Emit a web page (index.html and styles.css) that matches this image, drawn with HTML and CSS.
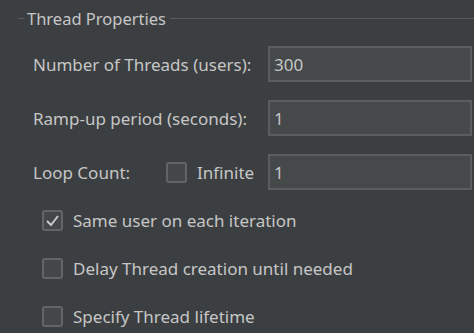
FILE: index.html
```html
<!DOCTYPE html>
<html lang="en">
<head>
    <meta charset="UTF-8">
    <meta name="viewport" content="width=device-width, initial-scale=1.0">
    <title>Thread Group</title>
    <link rel="stylesheet" href="styles.css">
</head>
<body>

<div class="group">
    <!-- Titled border -->
    <div class="group-title"><span>Thread Properties</span></div>

    <div class="form">
        <div class="row">
            <label class="label" for="threads">Number of Threads (users):</label>
            <input class="field" id="threads" type="text" value="300">
        </div>
        <div class="row">
            <label class="label" for="rampup">Ramp-up period (seconds):</label>
            <input class="field" id="rampup" type="text" value="1">
        </div>
        <div class="row">
            <span class="label loop-label">
                <span class="loop-text">Loop Count:</span>
                <span class="check-item">
                    <span class="box"></span>
                    <span>Infinite</span>
                </span>
            </span>
            <input class="field" id="loops" type="text" value="1">
        </div>
    </div>

    <div class="checks">
        <div class="check-item">
            <span class="box">
                <svg viewBox="0 0 21 21" width="21" height="21"><polyline points="5,11 9,15 16,6" fill="none" stroke="#c8c8c8" stroke-width="2"/></svg>
            </span>
            <span>Same user on each iteration</span>
        </div>
        <div class="check-item">
            <span class="box"></span>
            <span>Delay Thread creation until needed</span>
        </div>
        <div class="check-item">
            <span class="box"></span>
            <span>Specify Thread lifetime</span>
        </div>
    </div>
</div>

</body>
</html>
```

FILE: styles.css
```css
body {
    margin: 0;
    padding: 0;
    background-color: #3c3f41;
    color: #c6c6c6;
    font-family: "Noto Sans", "Open Sans", sans-serif;
    font-size: 17px;
    height: 333px;
    overflow: hidden;
}

.group {
    padding-top: 6px;
}

/* Line - title - line */
.group-title {
    display: flex;
    align-items: center;
    padding-left: 18px;
    height: 24px;
    font-size: 16.5px;
}

.group-title::before,
.group-title::after {
    content: "";
    height: 1px;
    background-color: #55595b;
}

.group-title::before {
    width: 7px;
}

.group-title::after {
    flex: 1;
}

.group-title span {
    padding: 0 4px 0 2px;
}

.form {
    padding: 16px 2px 0 33px;
    display: flex;
    flex-direction: column;
    gap: 18px;
}

.row {
    display: flex;
    align-items: center;
    height: 36px;
}

.label {
    width: 235px;
    flex-shrink: 0;
}

.loop-label {
    display: flex;
    align-items: center;
}

.loop-text {
    width: 133px;
}

.field {
    flex: 1;
    min-width: 0;
    height: 36px;
    box-sizing: border-box;
    background-color: #45494a;
    border: 2px solid #5a5d5f;
    color: #c6c6c6;
    font: inherit;
    padding: 0 4px;
    outline: none;
}

.check-item {
    display: flex;
    align-items: center;
    gap: 10px;
    height: 21px;
}

.box {
    width: 21px;
    height: 21px;
    box-sizing: border-box;
    border: 2px solid #626567;
    border-radius: 3px;
    background-color: #43474a;
    display: flex;
    align-items: center;
    justify-content: center;
}

.box svg {
    display: block;
    margin: -2px;
}

.checks {
    padding: 20px 0 0 42px;
    display: flex;
    flex-direction: column;
    gap: 27px;
}
```
